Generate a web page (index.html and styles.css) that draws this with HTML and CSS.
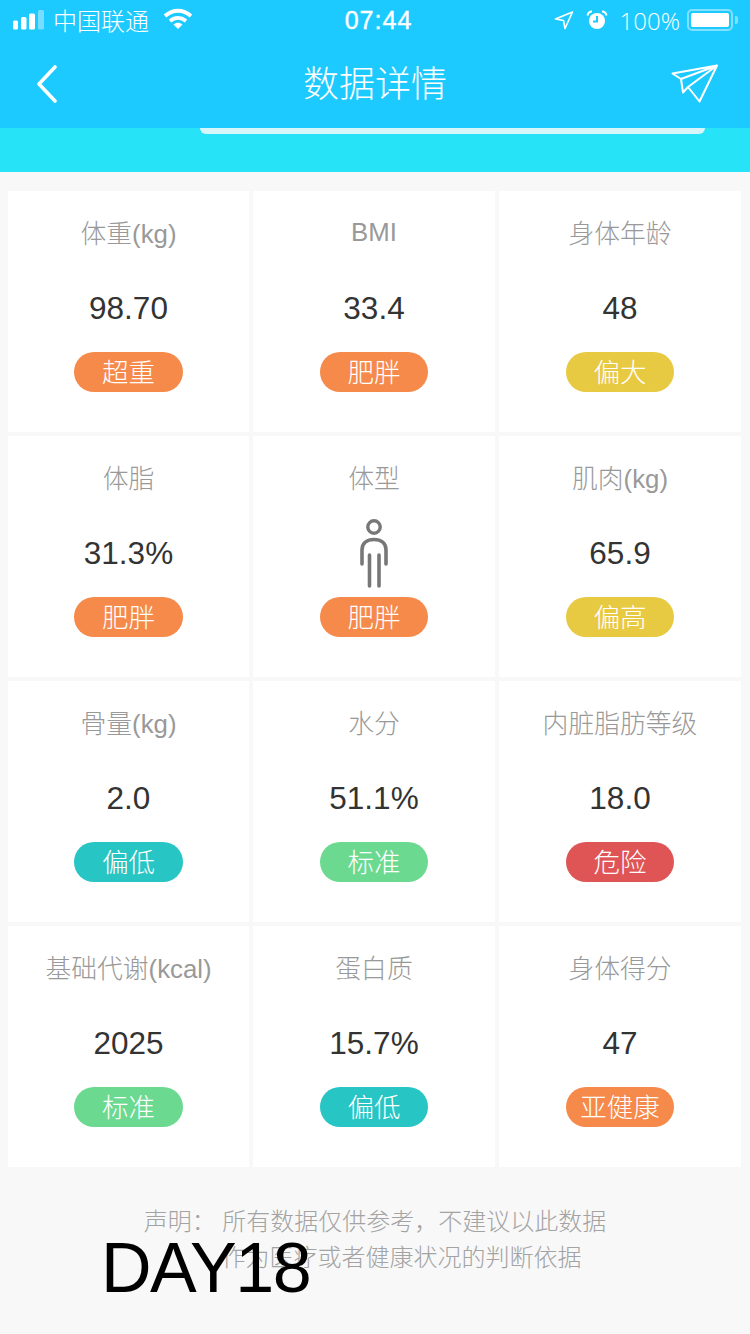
FILE: index.html
```html
<!DOCTYPE html>
<html lang="zh">
<head>
<meta charset="utf-8">
<title>数据详情</title>
<link rel="stylesheet" href="styles.css">
</head>
<body>
<header class="top">
  <div class="status">
    <div class="status-left">
      <svg class="signal" width="32" height="20" viewBox="0 0 32 20"><rect x="1" y="10.500" width="5" height="9" rx="1.500" fill="#fff"/><rect x="9" y="7" width="5.500" height="12.500" rx="1.500" fill="#fff"/><rect x="17" y="3.500" width="6" height="16" rx="1.500" fill="#fff"/><rect x="26" y="0" width="6" height="19.500" rx="1.500" fill="#fff" opacity=".4"/></svg>
      <span class="carrier">中国联通</span>
      <svg class="wifi" width="30" height="22" viewBox="0 0 30 22"><path d="M2 8C10 1 20 1 28 8" fill="none" stroke="#fff" stroke-width="3.800"/><path d="M7 13C12 9 18 9 23 13" fill="none" stroke="#fff" stroke-width="3.800"/><path d="M10.500 16.500C13.500 14 16.500 14 19.500 16.500L15 21Z" fill="#fff"/></svg>
    </div>
    <div class="clock">07:44</div>
    <div class="status-right">
      <svg width="20" height="20" viewBox="0 0 20 20"><path d="M1.500 9L18.500 2L11 18.500L9.500 10.500Z" fill="none" stroke="#fff" stroke-width="1.600" stroke-linejoin="round"/></svg>
      <svg class="alarm" width="22" height="22" viewBox="0 0 22 22"><circle cx="11" cy="12" r="8" fill="#fff"/><path d="M11 7V12.500H7" fill="none" stroke="#1ccaff" stroke-width="2"/><path d="M1.500 6.500C2 4 4 2.500 6 2.500M20.500 6.500C20 4 18 2.500 16 2.500" fill="none" stroke="#fff" stroke-width="2"/></svg>
      <span class="pct">100%</span>
      <div class="battery"><div class="battery-fill"></div></div>
      <div class="battery-tip"></div>
    </div>
  </div>
  <div class="nav">
    <svg class="back" width="24" height="38" viewBox="0 0 24 38"><path d="M20 2L4 19L20 36" fill="none" stroke="#fff" stroke-width="3.600" stroke-linecap="round" stroke-linejoin="round"/></svg>
    <h1 class="title">数据详情</h1>
    <svg class="send" width="48" height="40" viewBox="0 0 48 40"><path d="M1.500 9.500L46 1.500L28.500 37.500L17 23L12 28.500L10 15ZM10 15L46 1.500M17 23L46 1.500" fill="none" stroke="#fff" stroke-width="2" stroke-linejoin="round"/></svg>
  </div>
</header>
<div class="band"><div class="band-card"></div></div>
<main class="grid">
  <section class="cell"><div class="label">体重(kg)</div><div class="value">98.70</div><div class="tag orange">超重</div></section>
  <section class="cell"><div class="label label-latin">BMI</div><div class="value">33.4</div><div class="tag orange">肥胖</div></section>
  <section class="cell"><div class="label">身体年龄</div><div class="value">48</div><div class="tag yellow">偏大</div></section>
  <section class="cell"><div class="label">体脂</div><div class="value">31.3%</div><div class="tag orange">肥胖</div></section>
  <section class="cell"><div class="label">体型</div>
    <svg class="figure" width="30" height="70" viewBox="0 0 30 70"><circle cx="15" cy="8" r="6.200" fill="none" stroke="#777" stroke-width="3.400"/><path d="M3 45V31C3 24 8 20.500 15 20.500C22 20.500 27 24 27 31V45" fill="none" stroke="#777" stroke-width="3.600" stroke-linecap="round"/><path d="M10.500 36V67M20 36V67" fill="none" stroke="#777" stroke-width="3.600" stroke-linecap="round"/></svg>
    <div class="tag orange">肥胖</div></section>
  <section class="cell"><div class="label">肌肉(kg)</div><div class="value">65.9</div><div class="tag yellow">偏高</div></section>
  <section class="cell"><div class="label">骨量(kg)</div><div class="value">2.0</div><div class="tag teal">偏低</div></section>
  <section class="cell"><div class="label">水分</div><div class="value">51.1%</div><div class="tag green">标准</div></section>
  <section class="cell"><div class="label">内脏脂肪等级</div><div class="value">18.0</div><div class="tag red">危险</div></section>
  <section class="cell"><div class="label">基础代谢(kcal)</div><div class="value">2025</div><div class="tag green">标准</div></section>
  <section class="cell"><div class="label">蛋白质</div><div class="value">15.7%</div><div class="tag teal">偏低</div></section>
  <section class="cell"><div class="label">身体得分</div><div class="value">47</div><div class="tag orange">亚健康</div></section>
</main>
<footer class="note">
  <p>声明： 所有数据仅供参考，不建议以此数据</p>
  <p class="note-second">作为医疗或者健康状况的判断依据</p>
  <div class="day">DAY18</div>
</footer>
</body>
</html>
```
FILE: styles.css
```css
* { box-sizing: border-box; }
html, body { margin: 0; padding: 0; }
body {
  width: 750px;
  height: 1334px;
  overflow: hidden;
  background: #f8f8f8;
  font-family: "Liberation Sans", "Noto Sans CJK SC", sans-serif;
}
.top { height: 128px; background: #1ccaff; color: #fff; display: flex; flex-direction: column; }
.status { height: 40px; display: flex; align-items: center; justify-content: space-between; padding: 0 12px; position: relative; }
.status-left, .status-right { display: flex; align-items: center; }
.carrier { margin-left: 9px; margin-top: -2px; font-size: 24px; font-weight: 300; }
.wifi { margin-left: 14px; margin-top: -2px; }
.clock { position: absolute; left: 7px; right: 0; top: 0; text-align: center; line-height: 41px; font-size: 25px; font-weight: 400; letter-spacing: 1px; -webkit-text-stroke: .4px #fff; }
.alarm { margin-left: 12px; }
.pct { margin-left: 12px; font-size: 24px; font-family: "Open Sans", "Liberation Sans", sans-serif; font-weight: 300; }
.battery { margin-left: 7px; width: 46px; height: 22px; border: 2px solid #7fe0ff; border-radius: 5px; padding: 2px; }
.battery-fill { width: 100%; height: 100%; background: #fff; border-radius: 2px; }
.battery-tip { width: 3px; height: 8px; margin-left: 2px; background: #7fe0ff; border-radius: 0 2px 2px 0; }
.nav { height: 88px; display: flex; align-items: center; justify-content: space-between; padding: 0 31px 0 35px; position: relative; }
.back { flex: none; }
.title { position: absolute; left: 0; right: 0; top: 22px; margin: 0; text-align: center; font-size: 36px; line-height: 46px; font-weight: 300; }
.send { flex: none; }
.band { height: 44px; background: #27e3f7; display: flex; align-items: flex-start; padding-left: 200px; }
.band-card { width: 505px; height: 6px; background: #d7f6fb; border-radius: 0 0 14px 14px; }
.grid {
  margin: 19px 0 0 8px;
  width: 734px;
  display: grid;
  grid-template-columns: 241px 242px 242px;
  grid-auto-rows: 241px;
  gap: 4px;
}
.cell { background: #fff; display: flex; flex-direction: column; align-items: center; padding-top: 26px; }
.label { height: 34px; line-height: 34px; font-size: 25.800px; color: #999; font-weight: 300; white-space: nowrap; }
.label-latin { margin-top: -2px; margin-bottom: 2px; }
.value { margin-top: 39px; height: 36px; line-height: 36px; font-size: 31.500px; color: #333; }
.figure { margin-top: 23px; }
.tag { margin-top: 26px; width: 108.500px; height: 40px; border-radius: 20px; line-height: 42px; text-align: center; color: #fff; font-size: 26.500px; font-weight: 300; }
.figure + .tag { margin-top: 8px; }
.orange { background: #f58a4b; }
.yellow { background: #e8c942; }
.teal { background: #27c5c4; }
.green { background: #6cd991; }
.red { background: #df5555; }
.note { position: relative; margin-top: 37px; text-align: center; color: #a3a3a3; font-size: 24px; font-weight: 300; line-height: 36px; }
.note p { margin: 0; }
.note-second { padding-left: 53px; }
.day { position: absolute; left: 101px; top: 24px; font-size: 70px; line-height: 80px; color: #000; font-weight: 400; letter-spacing: -1.500px; }
```
